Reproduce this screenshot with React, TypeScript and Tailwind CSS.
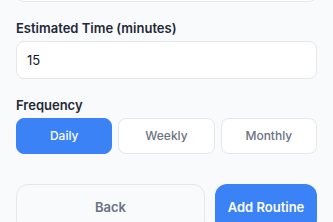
import { useState } from 'react'

type Frequency = 'Daily' | 'Weekly' | 'Monthly'

const FREQUENCIES: Frequency[] = ['Daily', 'Weekly', 'Monthly']

export default function App() {
  const [minutes, setMinutes] = useState('15')
  const [frequency, setFrequency] = useState<Frequency>('Daily')

  return (
    <div className="min-h-screen bg-[#f9fafb] font-['Inter',sans-serif] text-[#111827]">
      <div className="px-4 -mt-[38px]">
        {/* previous field, scrolled off */}
        <div className="mb-4">
          <div className="h-[40px] w-full rounded-lg border border-[#e5e7eb] bg-white" />
        </div>

        <div className="mb-4">
          <label className="block text-[13px] leading-5 font-semibold text-[#1f2937] mb-[3px]">
            Estimated Time (minutes)
          </label>
          <input
            type="number"
            value={minutes}
            onChange={(e) => setMinutes(e.target.value)}
            className="w-full h-[38px] px-[10px] rounded-lg border border-[#e5e7eb] bg-white text-[13px] text-[#111827] focus:outline-none"
          />
        </div>

        <div>
          <label className="block text-[13px] leading-5 font-semibold text-[#1f2937] mb-[3px]">
            Frequency
          </label>
          <div className="grid grid-cols-3 gap-1.5">
            {FREQUENCIES.map((f) => (
              <button
                key={f}
                type="button"
                onClick={() => setFrequency(f)}
                className={`h-[36px] rounded-lg border text-xs font-medium ${
                  frequency === f
                    ? 'bg-[#3b82f6] border-[#3b82f6] text-white'
                    : 'bg-white border-[#e5e7eb] text-[#6b7280]'
                }`}
              >
                {f}
              </button>
            ))}
          </div>
        </div>

        <div className="flex gap-2.5 mt-[30px]">
          <button
            type="button"
            className="flex-1 h-[48px] rounded-xl border border-[#e5e7eb] bg-[#f9fafb] text-[13px] font-semibold text-[#6b7280]"
          >
            Back
          </button>
          <button
            type="button"
            className="h-[48px] w-[102px] rounded-xl bg-[#3b82f6] text-[13px] font-semibold text-white"
          >
            Add Routine
          </button>
        </div>
      </div>
    </div>
  )
}
